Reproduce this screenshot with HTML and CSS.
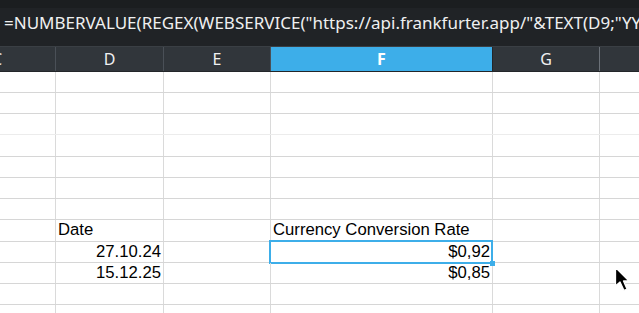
FILE: index.html
```html
<!DOCTYPE html>
<html lang="en">
<head>
    <meta charset="UTF-8">
    <title>Sheet</title>
    <link rel="stylesheet" href="styles.css">
</head>
<body>
    <div class="toolbar-strip"></div>

    <!-- formula bar -->
    <div class="formula-bar">=NUMBERVALUE(REGEX(WEBSERVICE("https://api.frankfurter.app/"&amp;TEXT(D9;"YYYY-MM-DD")&amp;"?from=USD&amp;to=EUR");"[0-9.]+"))</div>

    <!-- column headers -->
    <div class="row col-header">
        <div class="cell c">C</div>
        <div class="cell d">D</div>
        <div class="cell e">E</div>
        <div class="cell f active">F</div>
        <div class="cell g">G</div>
        <div class="cell h"></div>
    </div>

    <div class="sheet">
        <div class="row"><div class="cell c"></div><div class="cell d"></div><div class="cell e"></div><div class="cell f"></div><div class="cell g"></div><div class="cell h"></div></div>
        <div class="row"><div class="cell c"></div><div class="cell d"></div><div class="cell e"></div><div class="cell f"></div><div class="cell g"></div><div class="cell h"></div></div>
        <div class="row light"><div class="cell c"></div><div class="cell d"></div><div class="cell e"></div><div class="cell f"></div><div class="cell g"></div><div class="cell h"></div></div>
        <div class="row tall"><div class="cell c"></div><div class="cell d"></div><div class="cell e"></div><div class="cell f"></div><div class="cell g"></div><div class="cell h"></div></div>
        <div class="row"><div class="cell c"></div><div class="cell d"></div><div class="cell e"></div><div class="cell f"></div><div class="cell g"></div><div class="cell h"></div></div>
        <div class="row"><div class="cell c"></div><div class="cell d"></div><div class="cell e"></div><div class="cell f"></div><div class="cell g"></div><div class="cell h"></div></div>
        <div class="row"><div class="cell c"></div><div class="cell d"></div><div class="cell e"></div><div class="cell f"></div><div class="cell g"></div><div class="cell h"></div></div>
        <div class="row tall">
            <div class="cell c"></div>
            <div class="cell d">Date</div>
            <div class="cell e"></div>
            <div class="cell f">Currency Conversion Rate</div>
            <div class="cell g"></div>
            <div class="cell h"></div>
        </div>
        <div class="row">
            <div class="cell c"></div>
            <div class="cell d num">27.10.24</div>
            <div class="cell e"></div>
            <div class="cell f num selected">$0,92<span class="handle"></span></div>
            <div class="cell g"></div>
            <div class="cell h"></div>
        </div>
        <div class="row">
            <div class="cell c"></div>
            <div class="cell d num">15.12.25</div>
            <div class="cell e"></div>
            <div class="cell f num">$0,85</div>
            <div class="cell g"></div>
            <div class="cell h"></div>
        </div>
        <div class="row"><div class="cell c"></div><div class="cell d"></div><div class="cell e"></div><div class="cell f"></div><div class="cell g"></div><div class="cell h"></div></div>
        <div class="row tall"><div class="cell c"></div><div class="cell d"></div><div class="cell e"></div><div class="cell f"></div><div class="cell g"></div><div class="cell h"></div></div>
    </div>

    <!-- mouse pointer -->
    <svg class="pointer" width="20" height="28" viewBox="0 0 20 28">
        <path d="M1.5 1.5 L1.5 20 L6 16 L10 24.5 L13 23 L9.5 15 L15 15 Z" fill="#000" stroke="#fff" stroke-width="1.3" stroke-linejoin="round"/>
    </svg>
</body>
</html>
```

FILE: styles.css
```css
body {
    margin: 0;
    width: 639px;
    height: 313px;
    overflow: hidden;
    background: #ffffff;
    position: relative;
    font-family: 'Liberation Sans', Arial, sans-serif;
}

.toolbar-strip {
    height: 8px;
    background: #1b1e20;
}

.formula-bar {
    height: 38px;
    line-height: 30px;
    padding-left: 4px;
    background: #202326;
    color: #eff0f1;
    font-family: 'Noto Sans', sans-serif;
    font-size: 17px;
    white-space: nowrap;
    overflow: hidden;
    border-bottom: 1px solid #3a3f44;
}

.row {
    display: flex;
    height: 21px;
    border-bottom: 1px solid #d6d6d6;
    box-sizing: border-box;
}

.row.tall {
    height: 22px;
}

.row.light {
    border-bottom-color: #ececec;
}

.cell {
    flex: none;
    box-sizing: border-box;
    border-right: 1px solid #dadada;
    position: relative;
    font-size: 16.7px;
    color: #000;
    line-height: 20px;
    padding: 0 2px;
    white-space: nowrap;
}

.c { width: 56px; }
.d { width: 108px; }
.e { width: 107px; }
.f { width: 222px; }
.g { width: 107px; }
.h { flex: 1; border-right: none; }

.num {
    text-align: right;
}

/* column headers */
.col-header {
    height: 25px;
    background: #31363b;
    border-bottom: 1px solid #232629;
}

.col-header .cell {
    font-family: 'Noto Sans', sans-serif;
    font-size: 16px;
    line-height: 24px;
    color: #eff0f1;
    text-align: center;
    border-right-color: #4a5057;
}

.col-header .c {
    text-align: left;
    text-indent: -10px;
}

.col-header .active {
    background: #3daee9;
    color: #ffffff;
    font-weight: bold;
    border-right-color: #232629;
}

.col-header .g {
    border-right-color: #6b7178;
}

/* selected cell */
.selected::after {
    content: '';
    position: absolute;
    left: -2px;
    top: -2px;
    right: -1px;
    bottom: -2px;
    border: 2px solid #3daee9;
}

.handle {
    position: absolute;
    right: -3px;
    bottom: -4px;
    width: 5px;
    height: 5px;
    background: #3daee9;
    z-index: 2;
}

.pointer {
    position: absolute;
    left: 614px;
    top: 266px;
}
```
